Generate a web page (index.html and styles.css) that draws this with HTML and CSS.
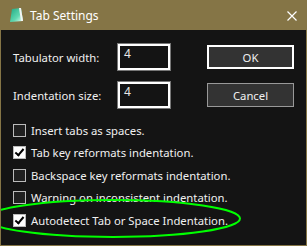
FILE: index.html
```html
<!DOCTYPE html>
<html lang="en">
<head>
    <meta charset="UTF-8">
    <title>Tab Settings</title>
    <link rel="stylesheet" href="styles.css">
</head>
<body>
    <div class="window">
        <!-- title bar -->
        <div class="titlebar">
            <svg class="app-icon" width="16" height="16" viewBox="0 0 16 16">
                <defs>
                    <linearGradient id="ig" x1="0" y1="0" x2="1" y2="1">
                        <stop offset="0" stop-color="#1fa882"/>
                        <stop offset="0.6" stop-color="#5fd8b0"/>
                        <stop offset="1" stop-color="#e8fff6"/>
                    </linearGradient>
                </defs>
                <polygon points="4,2 13,1 15,14 2,15" fill="url(#ig)"/>
                <polygon points="11,1 13,1 15,14 13,14" fill="#f4f4f4"/>
            </svg>
            <span class="title">Tab Settings</span>
            <svg class="close" width="10" height="10" viewBox="0 0 10 10">
                <path d="M0.5 0.5 L9.5 9.5 M9.5 0.5 L0.5 9.5" stroke="#fff" stroke-width="1.2"/>
            </svg>
        </div>

        <div class="content">
            <div class="form-row">
                <label class="field-label">Tabulator width:</label>
                <div class="field">4</div>
                <button class="btn btn-default">OK</button>
            </div>
            <div class="form-row">
                <label class="field-label">Indentation size:</label>
                <div class="field">4</div>
                <button class="btn">Cancel</button>
            </div>

            <div class="options">
                <div class="option"><span class="box"></span>Insert tabs as spaces.</div>
                <div class="option"><span class="box checked"></span>Tab key reformats indentation.</div>
                <div class="option"><span class="box"></span>Backspace key reformats indentation.</div>
                <div class="option"><span class="box"></span>Warning on inconsistent indentation.</div>
                <div class="option"><span class="box checked"></span>Autodetect Tab or Space Indentation.</div>
            </div>
        </div>

        <!-- hand drawn highlight -->
        <svg class="marker" width="307" height="246" viewBox="0 0 307 246">
            <ellipse cx="113" cy="218.5" rx="127" ry="18.5" fill="none" stroke="#00ff00" stroke-width="2"/>
        </svg>
    </div>
</body>
</html>
```

FILE: styles.css
```css
/* page */
body, html {
    margin: 0;
    padding: 0;
    background: #141414;
    font-family: 'Noto Sans', 'Open Sans', sans-serif;
    font-size: 11.3px;
    color: #f0f0f0;
}

.window {
    position: relative;
    width: 307px;
    height: 246px;
    box-sizing: border-box;
    border: 1px solid #857546;
    background: #141414;
    overflow: hidden;
}

/* title bar */
.titlebar {
    height: 29px;
    background: #857546;
    display: flex;
    align-items: center;
    padding: 0 9px 0 7px;
}

.app-icon {
    margin-right: 6px;
    margin-top: -1px;
}

.title {
    flex: 1;
    color: #fff;
    font-size: 12px;
}

.close {
    margin-top: 1px;
}

/* content */
.content {
    padding: 14px 12px 0 12px;
}

.form-row {
    display: flex;
    align-items: center;
    height: 26px;
    margin-bottom: 12px;
}

.field-label {
    width: 105px;
}

.field {
    width: 44px;
    height: 22px;
    border: 2px solid #fff;
    box-shadow: 0 0 0 1px #777;
    padding-left: 4px;
    line-height: 16px;
    color: #e8e8e8;
    font-size: 12px;
}

.btn {
    margin-left: 37px;
    width: 87px;
    height: 24px;
    background: #333;
    border: 1px solid #999;
    color: #f0f0f0;
    font-family: inherit;
    font-size: 11.3px;
    padding: 0;
}

.btn-default {
    border: 2px solid #fff;
}

/* checkboxes */
.options {
    margin-top: -1px;
}

.option {
    display: flex;
    align-items: center;
    height: 22.5px;
}

.box {
    width: 11px;
    height: 11px;
    border: 1px solid #bbb;
    background: #202020;
    margin-right: 5px;
    position: relative;
}

.box.checked {
    background: #fff;
}

.box.checked::after {
    content: '';
    position: absolute;
    left: 3px;
    top: 0px;
    width: 3px;
    height: 7px;
    border: solid #000;
    border-width: 0 2px 2px 0;
    transform: rotate(40deg);
}

.marker {
    position: absolute;
    left: -1px;
    top: -1px;
}
```
